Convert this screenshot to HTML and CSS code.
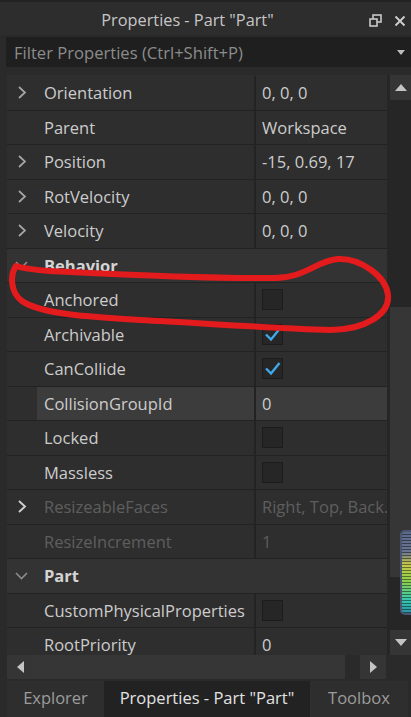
FILE: index.html
```html
<!DOCTYPE html>
<html>
<head>
<meta charset="utf-8">
<link rel="stylesheet" href="styles.css">
</head>
<body>
<div class="window">
  <div class="titlebar">
    <span class="title">Properties - Part "Part"</span>
    <div class="title-icons">
      <svg class="ico" width="13" height="13" viewBox="0 0 13 13"><rect x="4" y="1" width="8" height="7" fill="none" stroke="#c8c8c8" stroke-width="1.6"/><rect x="1" y="5" width="7" height="7" fill="#2d2d2d" stroke="#c8c8c8" stroke-width="1.6"/></svg>
      <svg class="ico" width="12" height="12" viewBox="0 0 12 12"><path d="M1.5 1.5 L10.5 10.5 M10.5 1.5 L1.5 10.5" stroke="#d0d0d0" stroke-width="1.8"/></svg>
    </div>
  </div>
  <div class="filter">
    <span class="filter-text">Filter Properties (Ctrl+Shift+P)</span>
    <span class="filter-arrow"></span>
  </div>
  <div class="main">
    <div class="table">
      <div class="row"><div class="name"><span class="chev"><svg width="10" height="13" viewBox="0 0 10 13"><path d="M2 1 L8 6.5 L2 12" fill="none" stroke="#a6a6a6" stroke-width="1.7"/></svg></span>Orientation</div><div class="val">0, 0, 0</div></div>
      <div class="row"><div class="name"><span class="chev"></span>Parent</div><div class="val">Workspace</div></div>
      <div class="row"><div class="name"><span class="chev"><svg width="10" height="13" viewBox="0 0 10 13"><path d="M2 1 L8 6.5 L2 12" fill="none" stroke="#a6a6a6" stroke-width="1.7"/></svg></span>Position</div><div class="val">-15, 0.69, 17</div></div>
      <div class="row"><div class="name"><span class="chev"><svg width="10" height="13" viewBox="0 0 10 13"><path d="M2 1 L8 6.5 L2 12" fill="none" stroke="#a6a6a6" stroke-width="1.7"/></svg></span>RotVelocity</div><div class="val">0, 0, 0</div></div>
      <div class="row"><div class="name"><span class="chev"><svg width="10" height="13" viewBox="0 0 10 13"><path d="M2 1 L8 6.5 L2 12" fill="none" stroke="#a6a6a6" stroke-width="1.7"/></svg></span>Velocity</div><div class="val">0, 0, 0</div></div>
      <div class="row section"><div class="name"><span class="chev dn"><svg width="13" height="8" viewBox="0 0 13 8"><path d="M1 1 L6.5 6.5 L12 1" fill="none" stroke="#8c8c8c" stroke-width="1.6"/></svg></span><b>Behavior</b></div></div>
      <div class="row"><div class="name"><span class="chev"></span>Anchored</div><div class="val"><span class="cb"></span></div></div>
      <div class="row"><div class="name"><span class="chev"></span>Archivable</div><div class="val"><span class="cb"><svg width="21" height="21" viewBox="0 0 21 21"><path d="M4 10.5 L9 15.5 L17.5 5" fill="none" stroke="#3fa9ea" stroke-width="2.4"/></svg></span></div></div>
      <div class="row"><div class="name"><span class="chev"></span>CanCollide</div><div class="val"><span class="cb"><svg width="21" height="21" viewBox="0 0 21 21"><path d="M4 10.5 L9 15.5 L17.5 5" fill="none" stroke="#3fa9ea" stroke-width="2.4"/></svg></span></div></div>
      <div class="row hover"><div class="name"><span class="chev"></span><span class="hl">CollisionGroupId</span></div><div class="val">0</div></div>
      <div class="row"><div class="name"><span class="chev"></span>Locked</div><div class="val"><span class="cb"></span></div></div>
      <div class="row"><div class="name"><span class="chev"></span>Massless</div><div class="val"><span class="cb"></span></div></div>
      <div class="row disabled"><div class="name"><span class="chev"><svg width="10" height="13" viewBox="0 0 10 13"><path d="M2 1 L8 6.5 L2 12" fill="none" stroke="#cfcfcf" stroke-width="1.9"/></svg></span>ResizeableFaces</div><div class="val">Right, Top, Back...</div></div>
      <div class="row disabled"><div class="name"><span class="chev"></span>ResizeIncrement</div><div class="val">1</div></div>
      <div class="row section"><div class="name"><span class="chev dn"><svg width="13" height="8" viewBox="0 0 13 8"><path d="M1 1 L6.5 6.5 L12 1" fill="none" stroke="#8c8c8c" stroke-width="1.6"/></svg></span><b>Part</b></div></div>
      <div class="row"><div class="name"><span class="chev"></span>CustomPhysicalProperties</div><div class="val"><span class="cb"></span></div></div>
      <div class="row"><div class="name"><span class="chev"></span>RootPriority</div><div class="val">0</div></div>
    </div>
    <div class="vscroll">
      <div class="sbtn up"><span class="tri-up"></span></div>
      <div class="track">
        <div class="thumb"></div>
      </div>
      <div class="sbtn"><span class="tri-down"></span></div>
    </div>
  </div>
  <div class="hscroll">
    <div class="hbtn"><span class="tri-left"></span></div>
    <div class="hthumb"></div>
    <div class="hgap"></div>
    <div class="hbtn"><span class="tri-right"></span></div>
    <div class="corner"></div>
  </div>
  <div class="tabs">
    <div class="tab">Explorer</div>
    <div class="tab active">Properties - Part "Part"</div>
    <div class="tab">Toolbox</div>
  </div>
</div>
<div class="peek"></div>
<svg class="scribble" width="411" height="717" viewBox="0 0 411 717">
  <path d="M 16 266 C 10 275, 10 292, 22 301 C 40 314, 90 317, 140 320 C 200 323, 270 328, 330 330 C 365 330, 390 314, 388 295 C 386 276, 360 258, 338 259 C 318 260, 305 278, 275 278 C 200 279, 110 274, 50 271 C 35 270, 22 268, 16 266 Z" fill="none" stroke="#e41b1d" stroke-width="6" stroke-linejoin="round"/>
</svg>
</body>
</html>
```

FILE: styles.css
```css
* { box-sizing: border-box; }
html, body {
  margin: 0;
  padding: 0;
  width: 411px;
  height: 717px;
  overflow: hidden;
  background: #2a2a2a;
  font-family: "Open Sans", Lato, sans-serif;
  font-size: 16.5px;
  color: #cccccc;
}
.window {
  display: flex;
  flex-direction: column;
  height: 717px;
  border-top: 2px solid #222;
}
.titlebar {
  height: 33px;
  display: flex;
  align-items: center;
  justify-content: center;
  position: relative;
  background: #2d2d2d;
}
.title {
  color: #c6c6c6;
  font-size: 16.3px;
  margin-left: -36px;
  margin-top: 2px;
}
.title-icons {
  position: absolute;
  right: 5px;
  top: 12px;
  display: flex;
  gap: 12px;
  align-items: center;
}
.filter {
  margin: 2px 0 0 6px;
  height: 30px;
  background: #1f1f1f;
  display: flex;
  align-items: center;
  padding-left: 8px;
  position: relative;
}
.filter-text { color: #8c8c8c; font-size: 16.6px; }
.filter-arrow {
  position: absolute;
  right: 6px;
  top: 13px;
  border-left: 4px solid transparent;
  border-right: 4px solid transparent;
  border-top: 5px solid #bbbbbb;
}
.main {
  margin-top: 8px;
  height: 580px;
  display: flex;
  padding-left: 7px;
  background: #2a2a2a;
}
.table {
  width: 380px;
  height: 580px;
  overflow: hidden;
  background: #2e2e2e;
  padding-top: 1px;
}
.row {
  height: 34.5px;
  display: flex;
  border-bottom: 1px solid #222222;
  background: #2e2e2e;
}
.name {
  width: 249px;
  display: flex;
  align-items: center;
  border-right: 2px solid #232323;
  white-space: nowrap;
  overflow: hidden;
}
.val {
  flex: 1;
  display: flex;
  align-items: center;
  padding-left: 6px;
  white-space: nowrap;
  overflow: hidden;
}
.chev {
  width: 37px;
  flex: none;
  padding-left: 10px;
  display: flex;
  align-items: center;
}
.chev.dn { padding-left: 8px; }
.section { background: #333333; }
.section .name { border-right: none; }
.section b { font-weight: 700; color: #d4d4d4; }
.hover .name { padding: 0; align-self: stretch; }
.hl {
  flex: 1;
  align-self: stretch;
  display: flex;
  align-items: center;
  padding-left: 7px;
  margin-left: -7px;
  background: #3c3c3c;
}
.hover .val { background: #3c3c3c; }
.disabled .name, .disabled .val { color: #5e5e5e; }
.cb {
  width: 21px;
  height: 21px;
  background: #262626;
  border: 1px solid #1c1c1c;
  display: block;
  position: relative;
}
.cb svg { position: absolute; left: -1px; top: -1px; }
.vscroll {
  width: 24px;
  display: flex;
  flex-direction: column;
  padding-left: 3px;
  background: #262626;
}
.sbtn {
  height: 25px;
  background: #353535;
  display: flex;
  align-items: center;
  justify-content: center;
}
.track {
  flex: 1;
  background: #262626;
  padding-top: 207px;
}
.thumb {
  height: 270px;
  background: #363636;
}
.tri-up {
  border-left: 6px solid transparent;
  border-right: 6px solid transparent;
  border-bottom: 7px solid #c4c4c4;
}
.tri-down {
  border-left: 6px solid transparent;
  border-right: 6px solid transparent;
  border-top: 7px solid #c4c4c4;
}
.hscroll {
  height: 24px;
  display: flex;
  padding-left: 7px;
  background: #2a2a2a;
}
.hbtn {
  width: 26px;
  background: #353535;
  display: flex;
  align-items: center;
  justify-content: center;
}
.hthumb { width: 312px; background: #363636; }
.hgap { width: 15px; background: #2a2a2a; }
.corner { flex: 1; background: #2a2a2a; }
.tri-left {
  border-top: 6px solid transparent;
  border-bottom: 6px solid transparent;
  border-right: 7px solid #c4c4c4;
}
.tri-right {
  border-top: 6px solid transparent;
  border-bottom: 6px solid transparent;
  border-left: 7px solid #c4c4c4;
}
.tabs {
  flex: 1;
  display: flex;
  padding: 2px 0 0 7px;
  background: #2a2a2a;
}
.tab {
  display: flex;
  align-items: center;
  justify-content: center;
  color: #9c9c9c;
  background: #2e2e2e;
  font-size: 16.5px;
  padding-bottom: 4px;
}
.tab:nth-child(1) { width: 97px; }
.tab.active { width: 206px; background: #222222; color: #e2e2e2; }
.tab:nth-child(3) { width: 98px; }
.peek {
  position: absolute;
  left: 400px;
  top: 530px;
  width: 20px;
  height: 85px;
  border-radius: 5px;
  border: 2px solid #4b5672;
  background:
    repeating-linear-gradient(to bottom, transparent 0 2px, rgba(0,0,0,0.45) 2px 3px),
    linear-gradient(to bottom, #5b6a8a 0%, #6c7590 25%, #c7c84a 40%, #8fd04a 60%, #35c7b2 85%, #2a8ea0 100%);
}
.scribble {
  position: absolute;
  left: 0;
  top: 0;
  pointer-events: none;
}
```
